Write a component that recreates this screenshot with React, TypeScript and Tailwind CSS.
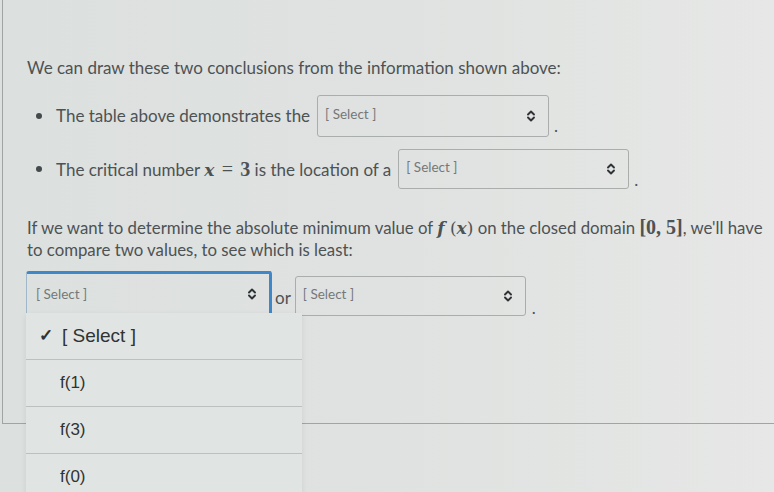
import React from "react";

const Chevrons: React.FC = () => (
  <svg width="10" height="14" viewBox="0 0 10 14" fill="none" stroke="#2f3335" strokeWidth="1.9" strokeLinecap="round" strokeLinejoin="round">
    <path d="M2 5.5 L5 2.5 L8 5.5" />
    <path d="M2 8.5 L5 11.5 L8 8.5" />
  </svg>
);

const SelectBox: React.FC<{ width: string; height: string; focused?: boolean }> = ({ width, height, focused }) => (
  <div
    className={`flex justify-between rounded-[3px] pl-[7px] pr-[12px] ${width} ${height} ${
      focused
        ? "items-start pt-[10px] border-[3px] border-[#3e88c9] border-l-[#9fb7c8] border-l-[1px] pl-[9px] pr-[10px]"
        : "items-center border border-[#a9adac]"
    }`}
  >
    <span className={`text-[13.5px] text-[#74787a] ${focused ? "" : "-mt-[4px]"}`}>[ Select ]</span>
    <span className={focused ? "pt-[3px]" : ""}>
      <Chevrons />
    </span>
  </div>
);

const MathX: React.FC = () => (
  <span className="font-['DejaVu_Serif',serif] italic font-bold text-[17px]">x</span>
);

const App: React.FC = () => {
  const options = ["f(1)", "f(3)", "f(0)"];

  return (
    <div className="relative w-[774px] h-[492px] overflow-hidden bg-linear-to-r from-[#dce0de] via-[#dfe2e0] to-[#e6e7e6] font-['Lato',sans-serif] text-[#4d5254]">
      <div className="ml-[2px] h-[424px] border-l border-b border-[#a2a4a3] pl-[24px] pt-[55px]">
        <p className="text-[17px] leading-[26px]">We can draw these two conclusions from the information shown above:</p>

        <div className="mt-[12px] flex flex-col gap-[8px]">
          <div className="flex items-center text-[17px]">
            <span className="ml-[9px] mr-[14px] h-[6px] w-[6px] rounded-full bg-[#44494b]" />
            <span className="whitespace-nowrap">The table above demonstrates the</span>
            <div className="ml-[7px]">
              <SelectBox width="w-[232px]" height="h-[42px]" />
            </div>
            <span className="ml-[5px] pt-[20px]">.</span>
          </div>

          <div className="flex items-center text-[17px]">
            <span className="ml-[9px] mr-[14px] h-[6px] w-[6px] rounded-full bg-[#44494b]" />
            <span className="whitespace-nowrap">
              The critical number <MathX />{" "}
              <span className="font-['Liberation_Serif',serif] text-[20px] mx-[3px]">=</span>{" "}
              <span className="font-['Liberation_Serif',serif] font-bold text-[20px]">3</span> is the location of a
            </span>
            <div className="ml-[7px]">
              <SelectBox width="w-[231px]" height="h-[40px]" />
            </div>
            <span className="ml-[5px] pt-[20px]">.</span>
          </div>
        </div>

        <p className="mt-[24px] text-[16.8px] leading-[22px] whitespace-nowrap">
          If we want to determine the absolute minimum value of{" "}
          <span className="font-['DejaVu_Serif',serif] text-[17px]">
            <span className="italic font-bold">f</span> (<span className="italic font-bold">x</span>)
          </span>{" "}
          on the closed domain{" "}
          <span className="font-['Liberation_Serif',serif] font-bold text-[20px]">[0, 5]</span>, we'll have
          <br />
          to compare two values, to see which is least:
        </p>

        <div className="mt-[10px] -ml-[1px] flex items-start">
          <SelectBox width="w-[246px]" height="h-[50px]" focused />
          <span className="ml-[3px] mr-[4px] mt-[14px] text-[17px]">or</span>
          <div className="mt-[5px]">
            <SelectBox width="w-[231px]" height="h-[40px]" />
          </div>
          <span className="ml-[6px] mt-[24px] text-[17px]">.</span>
        </div>
      </div>

      <div className="absolute left-[26px] top-[313px] w-[276px] bg-[#e0e5e3] font-['Liberation_Sans',sans-serif] text-[#2f3335] shadow-[0_2px_6px_rgba(0,0,0,0.08)]">
        <div className="flex h-[46px] items-center pl-[13px] text-[19px]">
          <span className="w-[23px] text-[17px] font-bold">✓</span>
          <span>[ Select ]</span>
        </div>
        {options.map((o) => (
          <div key={o} className="flex h-[47px] items-center border-t border-[#bcc0bf] pl-[34px] text-[17px]">
            {o}
          </div>
        ))}
      </div>
    </div>
  );
};

export default App;
